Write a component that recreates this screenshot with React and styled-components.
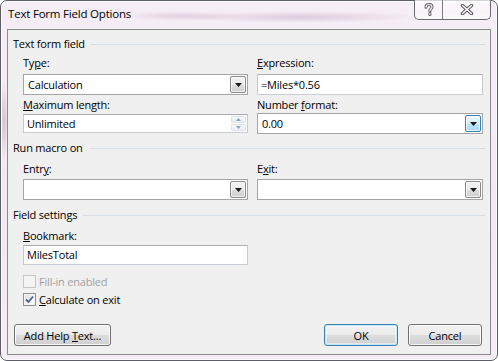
import React from 'react';
import styled, { createGlobalStyle } from 'styled-components';

const GlobalStyle = createGlobalStyle`
  html, body { margin: 0; padding: 0; background: #ffffff; }
  body {
    font-family: "Open Sans", "Noto Sans", sans-serif;
    font-size: 11px;
    letter-spacing: -0.2px;
    color: #000;
  }
`;

const Window = styled.div`
  box-sizing: border-box;
  width: 498px;
  height: 361px;
  border: 1px solid #5d5d66;
  border-radius: 7px;
  padding: 0 6px 5px 6px;
  display: flex;
  flex-direction: column;
  background:
    radial-gradient(ellipse 120px 6px at 300px 16px, rgba(170, 140, 170, 0.35), transparent),
    radial-gradient(ellipse 60px 5px at 180px 15px, rgba(170, 140, 170, 0.3), transparent),
    radial-gradient(ellipse 4px 40px at 3px 120px, rgba(150, 110, 150, 0.35), transparent),
    linear-gradient(180deg, #f6eef6 0%, #f2e8f2 60%, #f5edf5 100%);
  box-shadow: inset 0 0 0 1px rgba(255, 255, 255, 0.75);
`;

const TitleBar = styled.div`
  height: 28px;
  display: flex;
  align-items: flex-start;
  justify-content: space-between;
`;

const Title = styled.div`
  padding: 5px 0 0 1px;
  font-size: 11.5px;
  line-height: 16px;
  color: #000;
`;

const CaptionGroup = styled.div`
  display: flex;
  height: 19px;
  margin-top: -1px;
  border: 1px solid #6a6a72;
  border-top: none;
  border-radius: 0 0 5px 5px;
  overflow: hidden;
  background: linear-gradient(180deg, rgba(255,255,255,0.75), rgba(255,255,255,0.35) 60%, rgba(255,255,255,0.55));
`;

const CaptionButton = styled.div`
  width: ${(p) => p.$w}px;
  display: flex;
  align-items: center;
  justify-content: center;
  & + & { border-left: 1px solid #7a7a82; }
`;

const Client = styled.div`
  flex: 1;
  display: flex;
  flex-direction: column;
  background: #f0f0f0;
  border: 1px solid #8b8b90;
  padding: 0 5px;
`;

const GroupHeader = styled.div`
  display: flex;
  align-items: center;
  gap: 6px;
  height: 16px;
  line-height: 16px;
  margin-top: ${(p) => p.$mt}px;
  &::after {
    content: '';
    flex: 1;
    height: 1px;
    background: #d5dfe5;
  }
`;

const FieldRow = styled.div`
  display: grid;
  grid-template-columns: 225px 226px;
  column-gap: 9px;
  padding-left: 10px;
  align-items: start;
  margin-top: ${(p) => p.$mt || 0}px;
`;

const Field = styled.div`
  display: flex;
  flex-direction: column;
  gap: ${(p) => p.$gap}px;
`;

const Label = styled.div`
  height: 16px;
  line-height: 16px;
  color: ${(p) => (p.$disabled ? '#a0a0a0' : '#000')};
`;

const U = styled.span`
  text-decoration: underline;
  text-underline-offset: 1px;
`;

const Box = styled.div`
  box-sizing: border-box;
  height: ${(p) => p.$h}px;
  display: flex;
  align-items: stretch;
  background: #fff;
  border: 1px solid #abadb3;
  border-color: #abadb3 #c5c9d0 #c9ced6 #c5c9d0;
`;

const ComboBox = styled(Box)`
  border: 1px solid #a5a5a5;
  padding: 1px;
`;

const BoxText = styled.div`
  flex: 1;
  padding-left: 3px;
  line-height: ${(p) => p.$h}px;
  white-space: nowrap;
`;

const DropButton = styled.div`
  box-sizing: border-box;
  width: 16px;
  display: flex;
  align-items: center;
  justify-content: center;
  border: 1px solid ${(p) => (p.$hot ? '#3c7fb1' : '#8a8a8a')};
  border-radius: 2px;
  background: ${(p) =>
    p.$hot
      ? 'linear-gradient(180deg, #eaf6fd 0%, #d9f0fc 50%, #bee6fd 51%, #a7d9f5 100%)'
      : 'linear-gradient(180deg, #f2f2f2 0%, #ebebeb 50%, #dddddd 51%, #cfcfcf 100%)'};
  box-shadow: inset 0 0 0 1px rgba(255, 255, 255, 0.7);
`;

const SpinButtons = styled.div`
  width: 15px;
  display: flex;
  flex-direction: column;
  gap: 1px;
  padding: 1px 1px 1px 0;
`;

const SpinHalf = styled.div`
  flex: 1;
  display: flex;
  align-items: center;
  justify-content: center;
  background: linear-gradient(180deg, #f7f8fa, #eceef2);
  border: 1px solid #dfe2e8;
  border-radius: 1px;
`;

const CheckRow = styled.div`
  display: flex;
  align-items: center;
  gap: 3px;
  height: 16px;
  padding-left: 10px;
  margin-top: ${(p) => p.$mt}px;
  color: ${(p) => (p.$disabled ? '#a0a0a0' : '#000')};
`;

const CheckBox = styled.div`
  box-sizing: border-box;
  width: 13px;
  height: 13px;
  display: flex;
  align-items: center;
  justify-content: center;
  border: 1px solid ${(p) => (p.$disabled ? '#c5c5c5' : '#8e8f8f')};
  background: ${(p) =>
    p.$disabled
      ? '#f4f4f4'
      : 'linear-gradient(135deg, #dcdcdc 0%, #f3f3f3 60%, #ffffff 100%)'};
  box-shadow: inset 0 0 0 1px #f4f4f4;
`;

const ButtonRow = styled.div`
  display: flex;
  align-items: center;
  margin-top: 17px;
  padding: 0 3px 0 1px;
  gap: 10px;
`;

const Spacer = styled.div`
  flex: 1;
`;

const Button = styled.div`
  box-sizing: border-box;
  width: ${(p) => p.$w}px;
  height: 22px;
  display: flex;
  align-items: center;
  justify-content: center;
  white-space: pre;
  border: 1px solid ${(p) => (p.$default ? '#3c7fb1' : '#707070')};
  border-radius: 3px;
  background: linear-gradient(180deg, #f2f2f2 0%, #ebebeb 50%, #dddddd 51%, #cfcfcf 100%);
  box-shadow: ${(p) =>
    p.$default
      ? 'inset 0 0 0 1px #bfe8fb, inset 0 0 0 2px rgba(255,255,255,0.5)'
      : 'inset 0 0 0 1px rgba(255,255,255,0.8)'};
`;

const Arrow = ({ color = '#1a1a1a' }) => (
  <svg width="7" height="4" viewBox="0 0 7 4">
    <path d="M0 0H7L3.5 4Z" fill={color} />
  </svg>
);

const SpinArrow = ({ up }) => (
  <svg width="5" height="3" viewBox="0 0 5 3">
    <path d={up ? 'M0 3H5L2.5 0Z' : 'M0 0H5L2.5 3Z'} fill="#8ea3c0" />
  </svg>
);

const HelpGlyph = () => (
  <svg width="10" height="13" viewBox="0 0 10 13">
    <path
      d="M2 4.2C2 2.4 3.3 1.5 5 1.5S8 2.5 8 4c0 1.5-1.6 2-2.1 3.2V8M5.9 10.2v1.3"
      fill="none"
      stroke="#55555c"
      strokeWidth="3"
      strokeLinecap="round"
    />
    <path
      d="M2 4.2C2 2.4 3.3 1.5 5 1.5S8 2.5 8 4c0 1.5-1.6 2-2.1 3.2V8M5.9 10.2v1.3"
      fill="none"
      stroke="#ffffff"
      strokeWidth="1.2"
      strokeLinecap="round"
    />
  </svg>
);

const CloseGlyph = () => (
  <svg width="14" height="11" viewBox="0 0 14 11">
    <path d="M2.5 1.5L11.5 9.5M11.5 1.5L2.5 9.5" stroke="#55555c" strokeWidth="3.4" strokeLinecap="round" />
    <path d="M2.5 1.5L11.5 9.5M11.5 1.5L2.5 9.5" stroke="#ffffff" strokeWidth="1.5" strokeLinecap="round" />
  </svg>
);

const CheckMark = () => (
  <svg width="9" height="9" viewBox="0 0 9 9">
    <path d="M1 4.5L3.5 7L8 1.5" fill="none" stroke="#4a5f97" strokeWidth="1.8" />
  </svg>
);

const Combo = ({ value, hot, h = 21 }) => (
  <ComboBox $h={h}>
    <BoxText $h={h - 4}>{value}</BoxText>
    <DropButton $hot={hot}>
      <Arrow />
    </DropButton>
  </ComboBox>
);

const TextBox = ({ value, h = 20 }) => (
  <Box $h={h}>
    <BoxText $h={h - 2}>{value}</BoxText>
  </Box>
);

const SpinBox = ({ value, h = 20 }) => (
  <Box $h={h}>
    <BoxText $h={h - 2}>{value}</BoxText>
    <SpinButtons>
      <SpinHalf><SpinArrow up /></SpinHalf>
      <SpinHalf><SpinArrow /></SpinHalf>
    </SpinButtons>
  </Box>
);

export default function App() {
  return (
    <>
      <GlobalStyle />
      <Window>
        <TitleBar>
          <Title>Text Form Field Options</Title>
          <CaptionGroup>
            <CaptionButton $w={27}><HelpGlyph /></CaptionButton>
            <CaptionButton $w={47}><CloseGlyph /></CaptionButton>
          </CaptionGroup>
        </TitleBar>
        <Client>
          <GroupHeader $mt={6}>Text form field</GroupHeader>
          <FieldRow $mt={3}>
            <Field $gap={3}>
              <Label>Ty<U>p</U>e:</Label>
              <Combo value="Calculation" />
            </Field>
            <Field $gap={3}>
              <Label><U>E</U>xpression:</Label>
              <TextBox value="=Miles*0.56" h={21} />
            </Field>
          </FieldRow>
          <FieldRow $mt={2}>
            <Field $gap={1}>
              <Label><U>M</U>aximum length:</Label>
              <SpinBox value="Unlimited" h={19} />
            </Field>
            <Field $gap={0}>
              <Label>Number <U>f</U>ormat:</Label>
              <Combo value="0.00" hot />
            </Field>
          </FieldRow>
          <GroupHeader $mt={6}>Run macro on</GroupHeader>
          <FieldRow $mt={5}>
            <Field $gap={2}>
              <Label>Entr<U>y</U>:</Label>
              <Combo value="" />
            </Field>
            <Field $gap={2}>
              <Label>E<U>x</U>it:</Label>
              <Combo value="" />
            </Field>
          </FieldRow>
          <GroupHeader $mt={7}>Field settings</GroupHeader>
          <FieldRow $mt={5}>
            <Field $gap={1}>
              <Label><U>B</U>ookmark:</Label>
              <TextBox value="MilesTotal" h={20} />
            </Field>
          </FieldRow>
          <CheckRow $mt={8} $disabled>
            <CheckBox $disabled />
            <span>Fill-in enabled</span>
          </CheckRow>
          <CheckRow $mt={2}>
            <CheckBox><CheckMark /></CheckBox>
            <span><U>C</U>alculate on exit</span>
          </CheckRow>
          <ButtonRow>
            <Button $w={97}><span>Add Help <U>T</U>ext...</span></Button>
            <Spacer />
            <Button $w={74} $default>OK</Button>
            <Button $w={74}>Cancel</Button>
          </ButtonRow>
        </Client>
      </Window>
    </>
  );
}
